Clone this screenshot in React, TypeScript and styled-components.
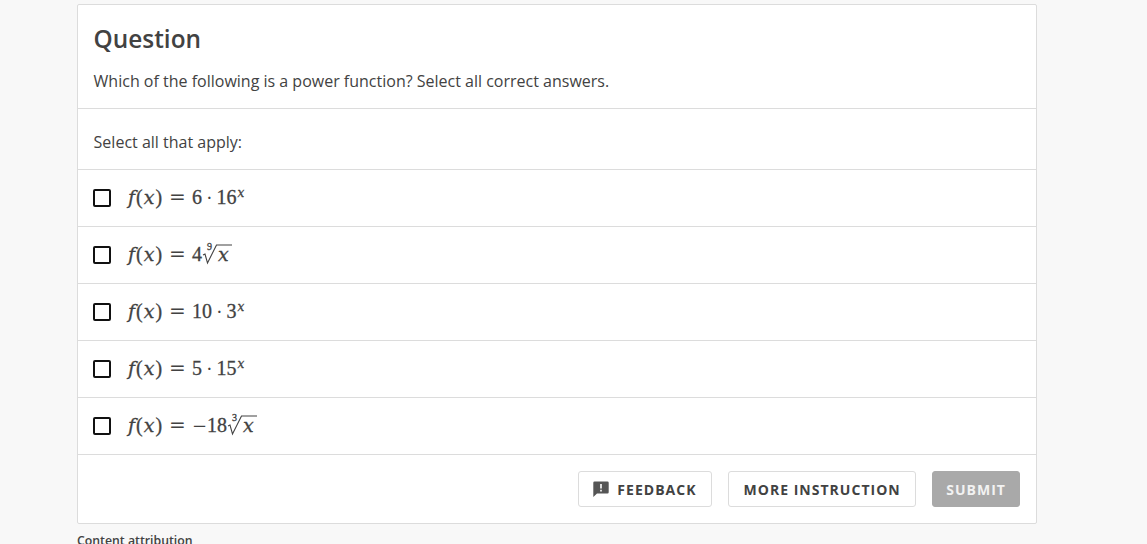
import React from "react";
import styled, { createGlobalStyle } from "styled-components";

const Global = createGlobalStyle`
  html, body { margin: 0; padding: 0; height: 544px; overflow: hidden; background: #f8f8f8; }
  body { font-family: "Open Sans", "Liberation Sans", sans-serif; color: #424242; }
`;
const Page = styled.main`
  width: 960px;
  margin-left: 77px;
  padding-top: 4px;
`;
const Card = styled.section`
  background: #fff;
  border: 1px solid #dcdcdc;
  border-radius: 2px;
  box-sizing: border-box;
  height: 520px;
`;
const Header = styled.header`
  height: 104px;
  box-sizing: border-box;
  padding: 16.5px 15.6px 0;
  border-bottom: 1px solid #dcdcdc;
`;
const Title = styled.h2`
  margin: 0;
  font-size: 24.4px;
  line-height: 34px;
  font-weight: 600;
  color: #424242;
`;
const Prompt = styled.p`
  margin: 13.5px 0 0;
  font-size: 16px;
  line-height: 24px;
`;
const Instruction = styled.div`
  height: 61px;
  box-sizing: border-box;
  padding: 6px 15.6px 0;
  display: flex;
  align-items: center;
  font-size: 16px;
  border-bottom: 1px solid #dcdcdc;
`;
const Row = styled.label`
  height: 57px;
  box-sizing: border-box;
  padding: 0 15px;
  display: flex;
  align-items: center;
  gap: 17px;
  border-bottom: 1px solid #dcdcdc;
`;
const Box = styled.span`
  width: 18px;
  height: 18px;
  box-sizing: border-box;
  border: 2.6px solid #111;
  border-radius: 2px;
  background: #fff;
  flex: none;
`;
const Math = styled.span`
  display: inline-block;
  padding-bottom: 2px;
  font-family: "Liberation Serif", "DejaVu Serif", serif;
  font-size: 20px;
  line-height: 24px;
  color: #424242;
  white-space: nowrap;
  -webkit-text-stroke: 0.3px #424242;
`;
const Var = styled.i`
  font-family: "DejaVu Serif", serif;
  font-style: italic;
  font-size: 19px;
`;
const Paren = styled.span`
  margin: 0 1px;
`;
const Op = styled.span<{ $space: number; $size: number }>`
  font-family: "DejaVu Serif", serif;
  font-size: ${(p) => p.$size}px;
  margin: 0 ${(p) => p.$space}px;
  -webkit-text-stroke: 0;
`;
const Sup = styled.sup`
  font-family: "DejaVu Serif", serif;
  font-size: 12px;
  line-height: 0;
  font-style: italic;
  vertical-align: 7px;
  margin-left: 1px;
`;
const Root = styled.span`
  display: inline-block;
  position: relative;
  padding-left: 16px;
`;
const RootIndex = styled.span`
  position: absolute;
  left: 5px;
  top: 0;
  font-size: 10px;
  line-height: 10px;
`;
const RootSign = styled.svg`
  position: absolute;
  left: 0;
  top: 0;
  width: 30px;
  height: 24px;
`;
const Footer = styled.footer`
  height: 68px;
  box-sizing: border-box;
  padding: 16px 16px 0;
  display: flex;
  justify-content: flex-end;
  gap: 16px;
`;
const Button = styled.button<{ $disabled?: boolean }>`
  height: 36px;
  box-sizing: border-box;
  padding: 0 ${(p) => (p.$disabled ? 13 : 14.5)}px;
  display: inline-flex;
  align-items: center;
  gap: 8px;
  border: 1px solid ${(p) => (p.$disabled ? "#a9a9a9" : "#dcdcdc")};
  border-radius: 3px;
  background: ${(p) => (p.$disabled ? "#a9a9a9" : "#fff")};
  color: ${(p) => (p.$disabled ? "#f2f2f2" : "#424242")};
  font-family: inherit;
  font-size: 14px;
  font-weight: 700;
  letter-spacing: 1.02px;
`;
const Attribution = styled.div`
  margin-top: 8.5px;
  font-size: 12.3px;
  line-height: 16px;
  font-weight: 600;
  color: #424242;
`;

const Fx = () => (
  <>
    <Var>f</Var>
    <Paren>(</Paren>
    <Var>x</Var>
    <Paren>)</Paren>
    <Op $space={6} $size={20}>=</Op>
  </>
);
const Radical = ({ index }: { index: string }) => (
  <Root>
    <RootSign viewBox="0 0 30 24" aria-hidden="true">
      <path d="M1 13 L3 12 L5.5 21 L14.5 3 H30" fill="none" stroke="#424242" strokeWidth="1.1" />
    </RootSign>
    <RootIndex>{index}</RootIndex>
    <Var>x</Var>
  </Root>
);
const Dot = () => <Op $space={4.5} $size={18}>·</Op>;

const options = [
  <><Fx />6<Dot />16<Sup>x</Sup></>,
  <><Fx />4<Radical index="9" /></>,
  <><Fx />10<Dot />3<Sup>x</Sup></>,
  <><Fx />5<Dot />15<Sup>x</Sup></>,
  <><Fx /><Op $space={0} $size={18}>−</Op>18<Radical index="3" /></>,
];

export default function App() {
  return (
    <Page>
      <Global />
      <Card>
        <Header>
          <Title>Question</Title>
          <Prompt>Which of the following is a power function? Select all correct answers.</Prompt>
        </Header>
        <Instruction>Select all that apply:</Instruction>
        {options.map((o, i) => (
          <Row key={i}>
            <Box />
            <Math>{o}</Math>
          </Row>
        ))}
        <Footer>
          <Button>
            <svg width="16" height="16" viewBox="0 0 16 16" aria-hidden="true">
              <path
                fill="#555"
                fillRule="evenodd"
                d="M1.5 0.5H14.5A1.2 1.2 0 0 1 15.7 1.7V11.3A1.2 1.2 0 0 1 14.5 12.5H4L0.3 16V1.7A1.2 1.2 0 0 1 1.5 0.5ZM7.2 3V7.6H8.8V3ZM7.2 8.8V10.4H8.8V8.8Z"
              />
            </svg>
            FEEDBACK
          </Button>
          <Button>MORE INSTRUCTION</Button>
          <Button $disabled>SUBMIT</Button>
        </Footer>
      </Card>
      <Attribution>Content attribution</Attribution>
    </Page>
  );
}
